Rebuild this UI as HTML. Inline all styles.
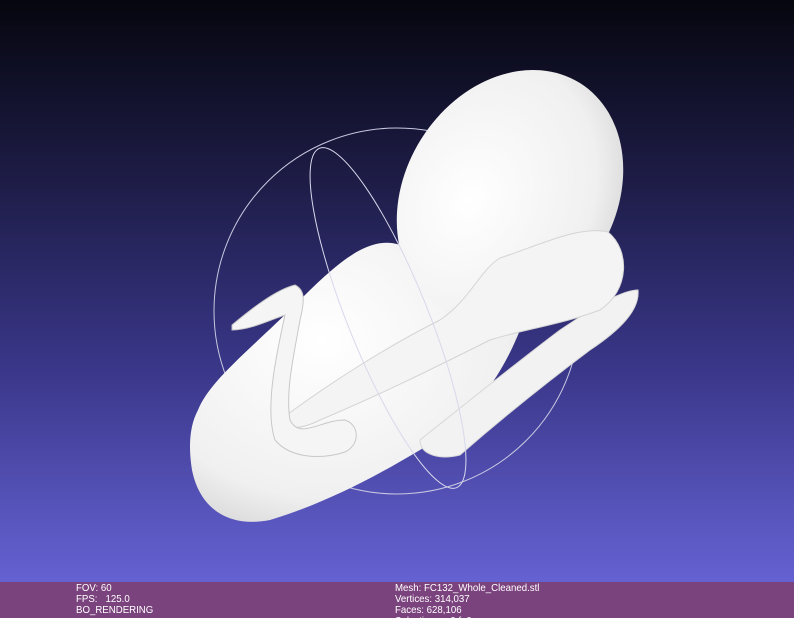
<!DOCTYPE html>
<html><head><style>
html,body{margin:0;padding:0;width:794px;height:618px;overflow:hidden;}
body{position:relative;background:linear-gradient(to bottom,#06060f 0%,#1e1d48 30%,#3a378a 60%,#5a57c0 85%,#6b68dc 100%);font-family:"Liberation Sans",sans-serif;}
svg{position:absolute;left:0;top:0;}
#bar{position:absolute;left:0;top:582px;width:794px;height:36px;background:#7b437e;color:#fff;font-size:10.5px;line-height:11px;}
.c{position:absolute;top:1px;transform:scaleX(0.92);transform-origin:left top;}
</style></head><body>
<svg width="794" height="582" viewBox="0 0 794 582">
<defs>
<radialGradient id="g" cx="0.4" cy="0.35" r="0.8"><stop offset="0" stop-color="#ffffff"/><stop offset="0.7" stop-color="#f0f0f0"/><stop offset="1" stop-color="#cfcfcf"/></radialGradient>
</defs>
<circle cx="397" cy="311" r="183" fill="none" stroke="#c8c8e0" stroke-width="1"/>
<path d="M198,410 C210,380 250,350 300,300 C340,260 370,235 400,245 C440,265 480,300 520,330 C500,380 470,420 420,450 C370,480 320,505 270,520 C230,528 200,510 192,470 C188,445 190,425 198,410 Z" fill="url(#g)"/>
<ellipse cx="510" cy="195" rx="132" ry="105" transform="rotate(-58 510 195)" fill="url(#g)"/>
<path d="M420,440 C470,400 520,360 560,330 C590,310 620,290 638,290 C640,310 620,330 590,350 C550,380 500,420 460,455 C440,460 420,455 420,440 Z" fill="#f2f2f2" stroke="#d8d8d8" stroke-width="1"/>
<path d="M280,420 C320,390 380,350 440,320 C470,300 480,270 500,258 C540,245 580,225 608,232 C630,250 630,290 600,310 C560,325 520,330 490,340 C440,365 380,395 320,420 C300,430 285,430 280,420 Z" fill="#f4f4f4" stroke="#d4d4d4" stroke-width="1"/>
<path d="M232,325 C250,310 275,290 295,285 C305,290 305,300 300,320 C295,350 285,390 290,420 C300,440 320,420 345,420 C360,425 360,445 345,452 C320,460 290,458 275,440 C265,410 275,360 285,315 C270,320 250,330 232,330 Z" fill="#f5f5f5" stroke="#c8c8c8" stroke-width="1"/>
<ellipse cx="388" cy="318" rx="40" ry="183" transform="rotate(-22 388 318)" fill="none" stroke="#d8d8ec" stroke-width="1"/>
</svg>
<div id="bar">
<div class="c" style="left:76px">FOV: 60<br>FPS: &nbsp; 125.0<br>BO_RENDERING</div>
<div class="c" style="left:395px">Mesh: FC132_Whole_Cleaned.stl<br>Vertices: 314,037<br>Faces: 628,106<br>Selection: v: 0 f: 0</div>
</div>
</body></html>
